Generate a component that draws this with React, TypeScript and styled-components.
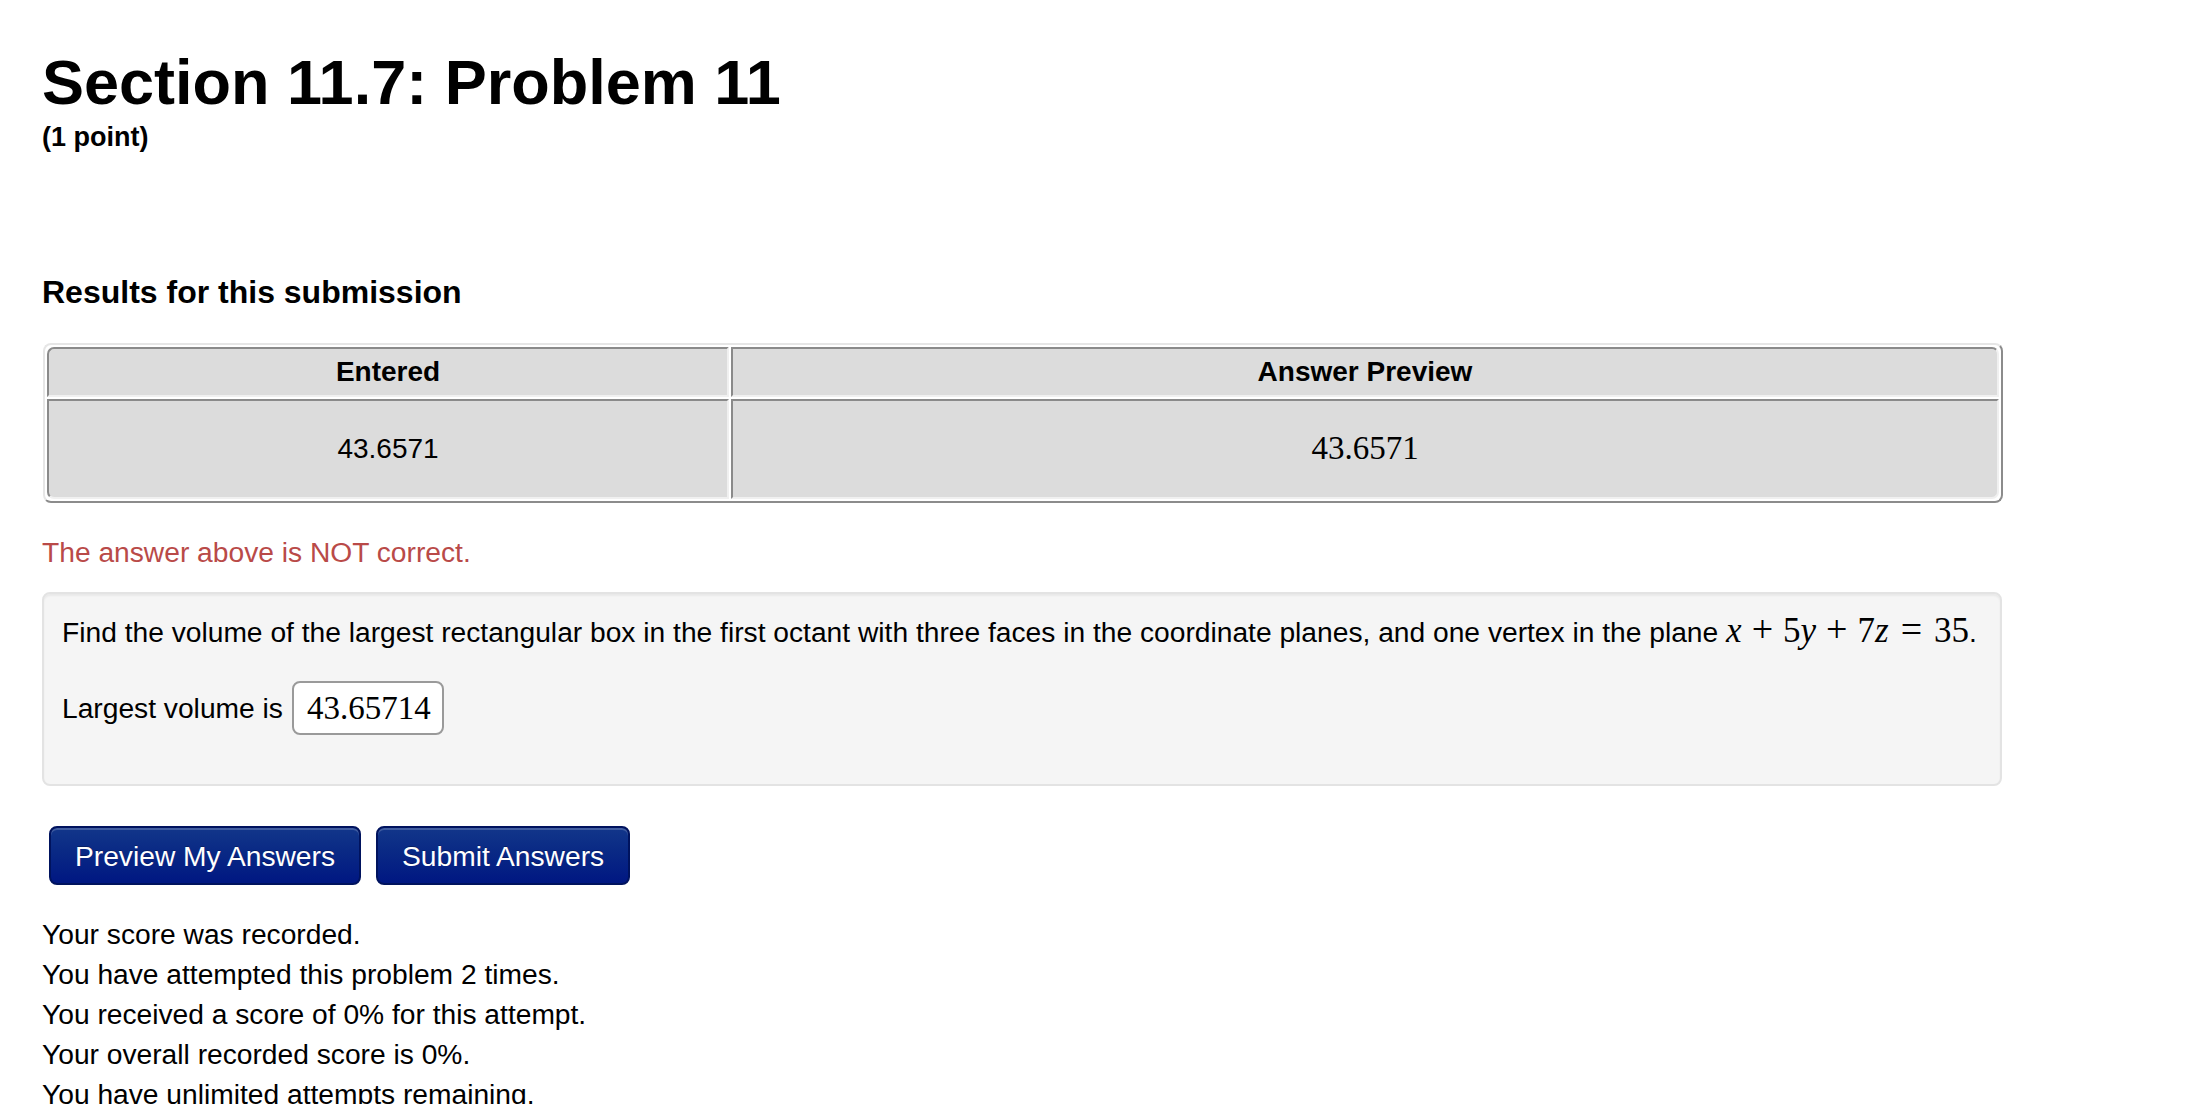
import React from "react";
import styled, { createGlobalStyle } from "styled-components";

const Global = createGlobalStyle`
  html, body { margin: 0; padding: 0; background: #fff; }
  body {
    font-family: "Liberation Sans", Arial, Helvetica, sans-serif;
    color: #000;
    font-size: 28.2px;
    line-height: 40px;
  }
`;

const Page = styled.div`
  padding: 0 42px;
  display: flex;
  flex-direction: column;
  align-items: flex-start;
`;

const Title = styled.h1`
  margin: 48px 0 0;
  font-size: 63px;
  line-height: 69px;
  font-weight: bold;
`;

const Points = styled.div`
  font-size: 27px;
  line-height: 40px;
  font-weight: bold;
`;

const SectionTitle = styled.h3`
  margin: 115px 0 0;
  font-size: 32px;
  line-height: 40px;
  font-weight: bold;
`;

const ResultsTable = styled.table`
  margin: 31px 0 0 1px;
  width: 1960px;
  border-collapse: separate;
  border-spacing: 2px;
  border-style: solid;
  border-width: 2px;
  border-color: #e6e6e6 #8c8c8c #8c8c8c #e6e6e6;
  border-radius: 8px;
`;

const Cell = styled.td<{ $head?: boolean; $w?: number }>`
  background: #dcdcdc;
  border-style: solid;
  border-width: 2px;
  border-color: #8a8a8a #f0f0f0 #f0f0f0 #8a8a8a;
  text-align: center;
  padding: 0;
  height: ${(p) => (p.$head ? 46 : 96)}px;
  font-weight: ${(p) => (p.$head ? "bold" : "normal")};
  font-size: 28px;
  line-height: 40px;
  ${(p) => (p.$w ? `width: ${p.$w}px;` : "")}
  &.tl { border-top-left-radius: 7px; }
  &.tr { border-top-right-radius: 7px; }
  &.bl { border-bottom-left-radius: 7px; }
  &.br { border-bottom-right-radius: 7px; }
`;

const MathNum = styled.span<{ $size?: number }>`
  font-family: "Liberation Serif", "Times New Roman", serif;
  font-size: ${(p) => p.$size ?? 33}px;
`;

const ErrorText = styled.div`
  margin-top: 29px;
  color: #b94a48;
  font-size: 28.2px;
  line-height: 40px;
`;

const Well = styled.div`
  margin-top: 20px;
  width: 1960px;
  box-sizing: border-box;
  background: #f5f5f5;
  border: 2px solid #e3e3e3;
  border-radius: 8px;
  box-shadow: inset 0 2px 2px rgba(0, 0, 0, 0.05);
  padding: 15px 18px 49px;
  display: flex;
  flex-direction: column;
  gap: 29px;
`;

const ProblemLine = styled.div`
  font-size: 28.2px;
  line-height: 40px;
  white-space: nowrap;
`;

const MathInline = styled.span`
  font-family: "Liberation Serif", "Times New Roman", serif;
  font-size: 35px;
`;

const Var = styled.i`
  font-style: italic;
`;

const Op = styled.span<{ $rel?: boolean }>`
  margin: 0 ${(p) => (p.$rel ? 12 : 10)}px;
  font-size: 38px;
`;

const AnswerRow = styled.div`
  display: flex;
  align-items: center;
  height: 54px;
  gap: 9px;
`;

const AnswerInput = styled.div`
  box-sizing: border-box;
  height: 54px;
  width: 152px;
  background: #fff;
  border: 2px solid #9a9a9a;
  border-radius: 8px;
  padding: 0 13px;
  display: flex;
  align-items: center;
  font-family: "Liberation Serif", "Times New Roman", serif;
  font-size: 33px;
  color: #000;
`;

const ButtonBar = styled.div`
  margin-top: 40px;
  padding-left: 7px;
  display: flex;
  gap: 15px;
`;

const Button = styled.button`
  height: 59px;
  padding: 0 24px;
  border: 2px solid #00135e;
  border-radius: 8px;
  background: linear-gradient(to bottom, #12368a 0%, #0a2a85 40%, #001782 100%);
  box-shadow: inset 0 2px 0 rgba(255, 255, 255, 0.2);
  color: #fff;
  font-family: "Liberation Sans", Arial, Helvetica, sans-serif;
  font-size: 28.2px;
  line-height: 40px;
  text-shadow: 0 -1px 0 rgba(0, 0, 0, 0.25);
  cursor: pointer;
`;

const ScoreList = styled.div`
  margin-top: 29px;
  display: flex;
  flex-direction: column;
`;

const ScoreLine = styled.div`
  font-size: 28.2px;
  line-height: 40px;
`;

export default function App() {
  return (
    <>
      <Global />
      <Page>
        <Title>Section 11.7: Problem 11</Title>
        <Points>(1 point)</Points>
        <SectionTitle>Results for this submission</SectionTitle>
        <ResultsTable>
          <tbody>
            <tr>
              <Cell $head $w={678} className="tl">Entered</Cell>
              <Cell $head className="tr">Answer Preview</Cell>
            </tr>
            <tr>
              <Cell className="bl">43.6571</Cell>
              <Cell className="br">
                <MathNum $size={33}>43.6571</MathNum>
              </Cell>
            </tr>
          </tbody>
        </ResultsTable>
        <ErrorText>The answer above is NOT correct.</ErrorText>
        <Well>
          <ProblemLine>
            Find the volume of the largest rectangular box in the first octant with three faces in the
            coordinate planes, and one vertex in the plane{" "}
            <MathInline>
              <Var>x</Var>
              <Op>+</Op>5<Var>y</Var>
              <Op>+</Op>7<Var>z</Var>
              <Op $rel>=</Op>35
            </MathInline>
            .
          </ProblemLine>
          <AnswerRow>
            <span>Largest volume is</span>
            <AnswerInput>43.65714</AnswerInput>
          </AnswerRow>
        </Well>
        <ButtonBar>
          <Button type="button">Preview My Answers</Button>
          <Button type="button">Submit Answers</Button>
        </ButtonBar>
        <ScoreList>
          <ScoreLine>Your score was recorded.</ScoreLine>
          <ScoreLine>You have attempted this problem 2 times.</ScoreLine>
          <ScoreLine>You received a score of 0% for this attempt.</ScoreLine>
          <ScoreLine>Your overall recorded score is 0%.</ScoreLine>
          <ScoreLine>You have unlimited attempts remaining.</ScoreLine>
        </ScoreList>
      </Page>
    </>
  );
}
